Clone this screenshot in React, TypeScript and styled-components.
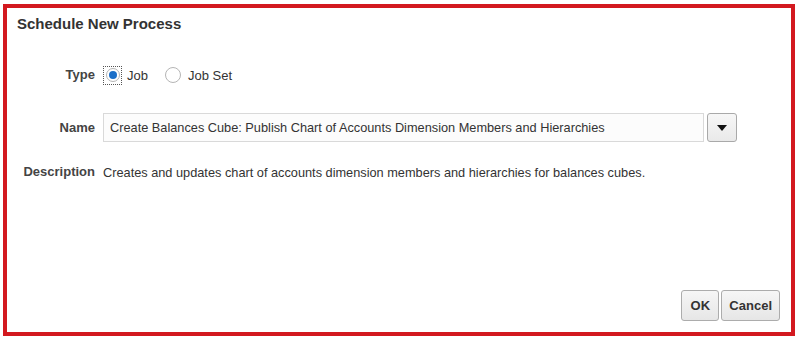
import React from "react";
import styled, { createGlobalStyle } from "styled-components";

const Global = createGlobalStyle`
  html, body { margin: 0; padding: 0; background: #ffffff; }
  body { font-family: "Liberation Sans", Arial, sans-serif; color: #333333; }
`;

const Page = styled.div`
  width: 800px;
  height: 340px;
  padding: 4px 5px 4px 3px;
  box-sizing: border-box;
`;

const Frame = styled.div`
  width: 792px;
  height: 332px;
  box-sizing: border-box;
  border: 4px solid #d3191f;
  display: flex;
  flex-direction: column;
  padding: 7px 11px 11px 10px;
`;

const Title = styled.h1`
  margin: 0;
  font-size: 15px;
  line-height: 18px;
  font-weight: bold;
  color: #333333;
`;

const Form = styled.div`
  display: grid;
  grid-template-columns: 78px 1fr;
  column-gap: 8px;
  margin-top: 32px;
`;

const Label = styled.div<{ $top: number }>`
  font-size: 13px;
  font-weight: bold;
  color: #444444;
  text-align: right;
  align-self: center;
  margin-top: ${(p) => p.$top}px;
  line-height: 16px;
`;

const Field = styled.div<{ $top: number }>`
  display: flex;
  align-items: center;
  margin-top: ${(p) => p.$top}px;
  font-size: 12.75px;
  color: #333333;
`;

const RadioGroup = styled.div`
  display: flex;
  align-items: center;
  height: 20px;
  font-size: 13px;
`;

const RadioOption = styled.label`
  display: flex;
  align-items: center;
  margin-right: 16px;
  cursor: pointer;
`;

const RadioFocus = styled.span<{ $focused?: boolean }>`
  display: inline-flex;
  align-items: center;
  justify-content: center;
  width: 19px;
  height: 19px;
  box-sizing: border-box;
  border: 1px dotted ${(p) => (p.$focused ? "#555555" : "transparent")};
  margin-right: 5px;
`;

const RadioCircle = styled.span<{ $checked?: boolean }>`
  width: ${(p) => (p.$checked ? 14 : 16)}px;
  height: ${(p) => (p.$checked ? 14 : 16)}px;
  box-sizing: border-box;
  border-radius: 50%;
  border: 1px solid #b5b5b5;
  background: #ffffff;
  display: flex;
  align-items: center;
  justify-content: center;
  &::after {
    content: "";
    display: ${(p) => (p.$checked ? "block" : "none")};
    width: 8px;
    height: 8px;
    border-radius: 50%;
    background: #1b6fc8;
  }
`;

const NameBox = styled.div`
  display: flex;
  align-items: center;
  gap: 3px;
`;

const TextInput = styled.div`
  width: 601px;
  height: 29px;
  box-sizing: border-box;
  border: 1px solid #d9d9d9;
  background: #fcfcfc;
  padding: 0 6px;
  display: flex;
  align-items: center;
  color: #333333;
  white-space: nowrap;
`;

const DropButton = styled.button`
  width: 30px;
  height: 29px;
  box-sizing: border-box;
  border: 1px solid #a9a9a9;
  border-radius: 3px;
  background: linear-gradient(#f7f7f7, #e9e9e9);
  display: flex;
  align-items: center;
  justify-content: center;
  padding: 0;
`;

const Footer = styled.div`
  margin-top: auto;
  display: flex;
  justify-content: flex-end;
  gap: 2px;
`;

const Button = styled.button`
  height: 31px;
  min-width: 38px;
  box-sizing: border-box;
  padding: 0 7px;
  border: 1px solid #acacac;
  border-radius: 3px;
  background: linear-gradient(#f6f6f6, #e6e6e6);
  font-family: "Liberation Sans", Arial, sans-serif;
  font-size: 13px;
  font-weight: bold;
  color: #333333;
`;

export default function App() {
  return (
    <Page>
      <Global />
      <Frame>
        <Title>Schedule New Process</Title>
        <Form>
          <Label $top={0}>Type</Label>
          <Field $top={0}>
            <RadioGroup>
              <RadioOption>
                <RadioFocus $focused>
                  <RadioCircle $checked />
                </RadioFocus>
                Job
              </RadioOption>
              <RadioOption>
                <RadioFocus>
                  <RadioCircle />
                </RadioFocus>
                Job Set
              </RadioOption>
            </RadioGroup>
          </Field>
          <Label $top={28}>Name</Label>
          <Field $top={28}>
            <NameBox>
              <TextInput>
                Create Balances Cube: Publish Chart of Accounts Dimension Members and Hierarchies
              </TextInput>
              <DropButton aria-label="Open list">
                <svg width="10" height="6" viewBox="0 0 10 6">
                  <path d="M0 0 L10 0 L5 6 Z" fill="#111111" />
                </svg>
              </DropButton>
            </NameBox>
          </Field>
          <Label $top={22}>Description</Label>
          <Field $top={22}>
            Creates and updates chart of accounts dimension members and hierarchies for balances cubes.
          </Field>
        </Form>
        <Footer>
          <Button>OK</Button>
          <Button>Cancel</Button>
        </Footer>
      </Frame>
    </Page>
  );
}
